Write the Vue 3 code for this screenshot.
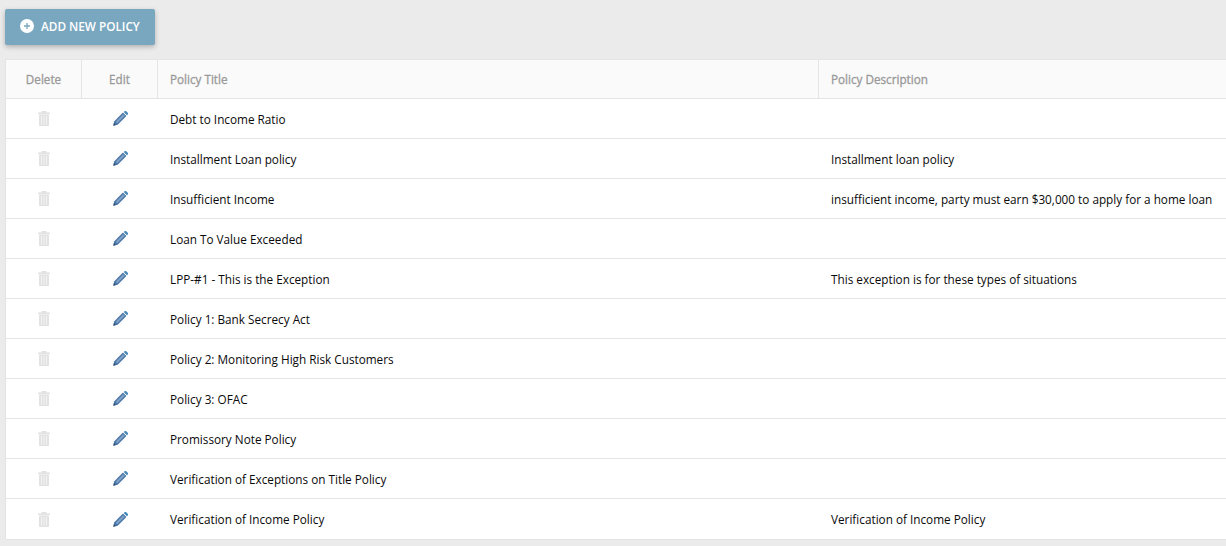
<script setup>
const rows = [
  ['Debt to Income Ratio', ''],
  ['Installment Loan policy', 'Installment loan policy'],
  ['Insufficient Income', 'insufficient income, party must earn $30,000 to apply for a home loan'],
  ['Loan To Value Exceeded', ''],
  ['LPP-#1 - This is the Exception', 'This exception is for these types of situations'],
  ['Policy 1: Bank Secrecy Act', ''],
  ['Policy 2: Monitoring High Risk Customers', ''],
  ['Policy 3: OFAC', ''],
  ['Promissory Note Policy', ''],
  ['Verification of Exceptions on Title Policy', ''],
  ['Verification of Income Policy', 'Verification of Income Policy'],
]
</script>

<template>
  <div class="page">
    <div class="toolbar">
      <button class="add">
        <svg class="plus" width="14" height="14" viewBox="0 0 14 14">
          <circle cx="7" cy="7" r="7" fill="#fff" />
          <path d="M7 4v6M4 7h6" stroke="#7aa7c0" stroke-width="1.3" />
        </svg>
        <span>ADD NEW POLICY</span>
      </button>
    </div>
    <div class="table">
      <div class="row head">
        <div class="cell c1">Delete</div>
        <div class="cell c2">Edit</div>
        <div class="cell c3">Policy Title</div>
        <div class="cell c4">Policy Description</div>
      </div>
      <div v-for="r in rows" :key="r[0]" class="row">
        <div class="cell c1">
          <svg width="12" height="15" viewBox="0 0 12 15">
            <path d="M0 1.5h12v1.5H0zM3.5 0h5v2h-5z" fill="#e2e2e2" />
            <path d="M1 3.5h10V14a1 1 0 0 1-1 1H2a1 1 0 0 1-1-1z" fill="#e2e2e2" />
            <path d="M3.5 5v8.5M6 5v8.5M8.5 5v8.5" stroke="#f4f4f4" stroke-width="1" />
          </svg>
        </div>
        <div class="cell c2">
          <svg width="15" height="15" viewBox="0 0 15 15">
            <path d="M0.3 14.7l1-4.4L10 1.6l3.4 3.4-8.7 8.7z" fill="#4a76a8" />
            <path d="M2.7 10.7l7.5-7.5 1.6 1.6-7.5 7.5z" fill="#7ea0c4" />
            <path d="M10.8 1l.8-.7a1.2 1.2 0 0 1 1.6 0l1.5 1.5a1.2 1.2 0 0 1 0 1.6l-.8.8z" fill="#3f86b8" />
            <path d="M0.3 14.7l.6-2.6 2 2z" fill="#2f4f73" />
          </svg>
        </div>
        <div class="cell c3">{{ r[0] }}</div>
        <div class="cell c4">{{ r[1] }}</div>
      </div>
    </div>
  </div>
</template>

<style>
html, body { margin: 0; background: #ebebeb; }
</style>

<style scoped>
.page {
  width: 1226px;
  height: 546px;
  overflow: hidden;
  background: #ebebeb;
  font-family: "Open Sans", "Noto Sans", sans-serif;
  font-size: 11.75px;
}
.toolbar {
  height: 59px;
  padding: 9px 0 0 5px;
  box-sizing: border-box;
}
.add {
  display: flex;
  align-items: center;
  gap: 7px;
  width: 150px;
  height: 36px;
  padding: 0 0 2px 15px;
  border: 0;
  border-radius: 2px;
  background: #7aa7c0;
  color: #fff;
  font: 600 11.75px "Open Sans", sans-serif;
  box-shadow: 0 2px 5px rgba(0, 0, 0, 0.25);
}
.plus { flex: none; }
.table {
  margin-left: 5px;
  background: #fff;
  border: 1px solid #e4e4e4;
  border-right: 0;
  box-sizing: border-box;
}
.row {
  display: flex;
  height: 40px;
  border-bottom: 1px solid #e4e4e4;
  box-sizing: border-box;
  color: #0a0a0a;
}
.row:last-child { border-bottom: 0; }
.head {
  height: 39px;
  background: #fafafa;
  color: #999;
  font-size: 11.7px;
  -webkit-text-stroke: 0.3px #999;
}
.cell {
  display: flex;
  align-items: center;
  flex: none;
  box-sizing: border-box;
  padding: 0 12px;
  white-space: nowrap;
}
.c1, .c2 { justify-content: center; padding: 0; width: 76px; }
.c3 { width: 660px; }
.c4 { width: 408px; padding-left: 13px; }
.head .cell { border-left: 1px solid #e4e4e4; }
.head .c1 { border-left: 0; width: 75px; }
.head .c2 { width: 76px; }
.head .c3 { width: 661px; }
.head .c4 { padding-left: 12px; }
</style>
